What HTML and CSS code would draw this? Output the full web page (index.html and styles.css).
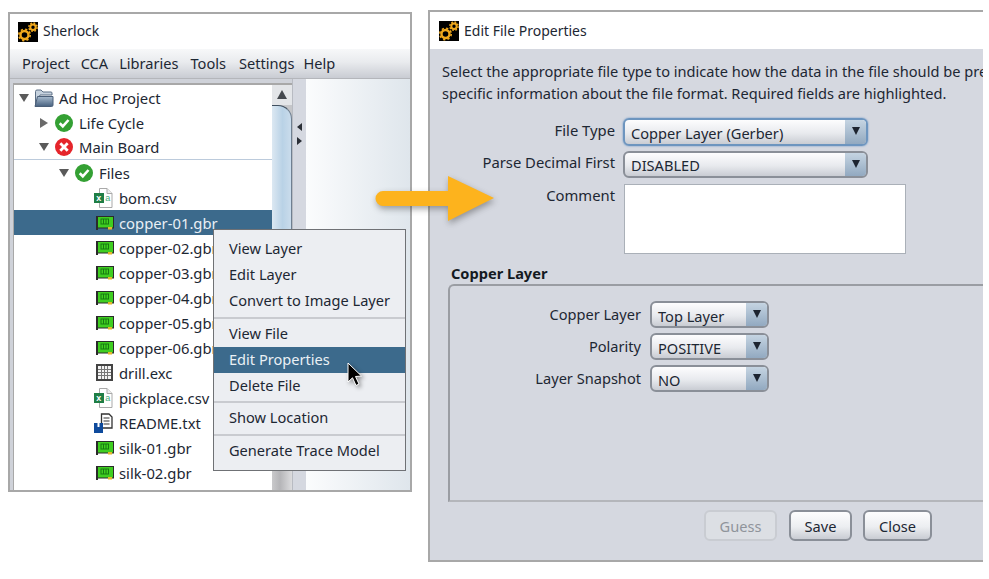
FILE: index.html
```html
<!DOCTYPE html>
<html lang="en">
<head>
<meta charset="utf-8">
<title>Sherlock - Edit File Properties</title>
<link rel="stylesheet" href="styles.css">
</head>
<body>
<svg class="defs" width="0" height="0" aria-hidden="true">
  <defs>
    <symbol id="gears" viewBox="0 0 20 20">
      <rect width="20" height="20" fill="#000"/>
      <circle cx="6.5" cy="13" r="4" fill="none" stroke="#f0a81c" stroke-width="2.4"/>
      <circle cx="6.5" cy="13" r="5.7" fill="none" stroke="#f0a81c" stroke-width="1.6" stroke-dasharray="2.2 2.27"/>
      <circle cx="15" cy="5.2" r="2.7" fill="none" stroke="#f0a81c" stroke-width="2"/>
      <circle cx="15" cy="5.2" r="4.2" fill="none" stroke="#f0a81c" stroke-width="1.4" stroke-dasharray="1.8 1.5"/>
    </symbol>
    <linearGradient id="fld" x1="0" y1="0" x2="0" y2="1">
      <stop offset="0" stop-color="#a9bccf"/><stop offset="1" stop-color="#47617f"/>
    </linearGradient>
    <symbol id="folder" viewBox="0 0 20 20">
      <path d="M1.5 18V3.5q0-1.5 1.5-1.5h4l2 2h8q1 0 1 1v2H6z" fill="#c6d2de" stroke="#5c6f85"/>
      <path d="M1 18.5 3.5 8.5h15.500L19 17q0 1.500-1.500 1.500z" fill="url(#fld)" stroke="#4b5f78"/>
    </symbol>
    <symbol id="ok" viewBox="0 0 18 18">
      <circle cx="9" cy="9" r="9" fill="#34a033"/>
      <path d="M4.700 9.300 7.800 12.300 13.500 6" fill="none" stroke="#fff" stroke-width="2.600"/>
    </symbol>
    <symbol id="bad" viewBox="0 0 18 18">
      <circle cx="9" cy="9" r="9" fill="#e5252b"/>
      <path d="M5.300 5.300 12.700 12.700M12.700 5.300 5.300 12.700" fill="none" stroke="#fff" stroke-width="2.800"/>
    </symbol>
    <symbol id="xls" viewBox="0 0 19 20">
      <path d="M5.500.5H13L18 5.500V19.500H5.500z" fill="#fff" stroke="#a9a9a9"/>
      <path d="M13 .5V5.500H18" fill="#eee" stroke="#a9a9a9"/>
      <rect x="0" y="5" width="10" height="10" fill="#1f7e45"/>
      <text x="2.300" y="12.800" font-family="Liberation Sans" font-weight="700" font-size="9" fill="#fff">x</text>
      <text x="11.300" y="13" font-family="Liberation Sans" font-size="9" fill="#3fae7c">a</text>
    </symbol>
    <symbol id="pcb" viewBox="0 0 18 14">
      <rect x=".5" y=".5" width="17" height="11.500" fill="#3fce20" stroke="#2b2b2b"/>
      <rect x="0" y="0" width="2" height="14" fill="#2b2b2b"/>
      <rect x="5" y="3" width="7.500" height="5" fill="none" stroke="#167a10" stroke-width="1"/>
      <path d="M7.500 3V8M10 3V8" stroke="#167a10" stroke-width="1"/>
      <rect x="12" y="11" width="4" height="2.500" fill="#e3b92c"/>
    </symbol>
    <symbol id="grid" viewBox="0 0 17 17">
      <rect x="1" y="1" width="15" height="15" fill="#f4f4f4" stroke="#444" stroke-width="2"/>
      <path d="M2 5.500H15M2 8.500H15M2 11.500H15M5.500 2V15M8.500 2V15M11.500 2V15" stroke="#777" stroke-width="1"/>
    </symbol>
    <symbol id="txt" viewBox="0 0 19 20">
      <path d="M7.500 1H15L18 4V15H7.500z" fill="#fff" stroke="#333" stroke-width="1.300"/>
      <path d="M9.500 5H15.500M9.500 8H15.500M9.500 11H15.500" stroke="#333" stroke-width="1.200"/>
      <rect x="0" y="10" width="9" height="10" fill="#0e4a9c"/>
      <rect x="3.500" y="10" width="2" height="4" fill="#fff"/>
    </symbol>
  </defs>
</svg>

<section class="window window-main">
  <header class="titlebar titlebar-main">
    <svg class="logo"><use href="#gears"/></svg>
    <span>Sherlock</span>
  </header>
  <nav class="menubar">
    <span>Project</span><span>CCA</span><span>Libraries</span><span>Tools</span><span>Settings</span><span>Help</span>
  </nav>
  <div class="workspace">
    <ul class="tree">
      <li class="row d0"><i class="twist open"></i><svg class="ico ico-folder"><use href="#folder"/></svg><span>Ad Hoc Project</span></li>
      <li class="row d1"><i class="twist closed"></i><svg class="ico ico-status"><use href="#ok"/></svg><span>Life Cycle</span></li>
      <li class="row d1 ruled"><i class="twist open"></i><svg class="ico ico-status"><use href="#bad"/></svg><span>Main Board</span></li>
      <li class="row d2"><i class="twist open"></i><svg class="ico ico-status"><use href="#ok"/></svg><span>Files</span></li>
      <li class="row d3"><i class="twist"></i><svg class="ico ico-doc"><use href="#xls"/></svg><span>bom.csv</span></li>
      <li class="row d3 selected"><i class="twist"></i><svg class="ico ico-pcb"><use href="#pcb"/></svg><span>copper-01.gbr</span></li>
      <li class="row d3"><i class="twist"></i><svg class="ico ico-pcb"><use href="#pcb"/></svg><span>copper-02.gbr</span></li>
      <li class="row d3"><i class="twist"></i><svg class="ico ico-pcb"><use href="#pcb"/></svg><span>copper-03.gbr</span></li>
      <li class="row d3"><i class="twist"></i><svg class="ico ico-pcb"><use href="#pcb"/></svg><span>copper-04.gbr</span></li>
      <li class="row d3"><i class="twist"></i><svg class="ico ico-pcb"><use href="#pcb"/></svg><span>copper-05.gbr</span></li>
      <li class="row d3"><i class="twist"></i><svg class="ico ico-pcb"><use href="#pcb"/></svg><span>copper-06.gbr</span></li>
      <li class="row d3"><i class="twist"></i><svg class="ico ico-grid"><use href="#grid"/></svg><span>drill.exc</span></li>
      <li class="row d3"><i class="twist"></i><svg class="ico ico-doc"><use href="#xls"/></svg><span>pickplace.csv</span></li>
      <li class="row d3"><i class="twist"></i><svg class="ico ico-doc"><use href="#txt"/></svg><span>README.txt</span></li>
      <li class="row d3"><i class="twist"></i><svg class="ico ico-pcb"><use href="#pcb"/></svg><span>silk-01.gbr</span></li>
      <li class="row d3"><i class="twist"></i><svg class="ico ico-pcb"><use href="#pcb"/></svg><span>silk-02.gbr</span></li>
    </ul>
    <div class="scrollbar">
      <div class="scroll-up"><i></i></div>
      <div class="scroll-thumb"></div>
      <div class="scroll-track"></div>
    </div>
    <div class="splitter"><i class="nudge left"></i><i class="nudge right"></i></div>
    <div class="side-panel"></div>
  </div>
</section>

<section class="window window-props">
  <header class="titlebar titlebar-props">
    <svg class="logo"><use href="#gears"/></svg>
    <span>Edit File Properties</span>
  </header>
  <div class="props-body">
    <p class="intro">Select the appropriate file type to indicate how the data in the file should be presented and to provide<br>specific information about the file format. Required fields are highlighted.</p>
    <div class="form">
      <label class="lbl lbl-first">File Type</label>
      <div class="select wide focus"><span>Copper Layer (Gerber)</span><b></b></div>
      <label class="lbl">Parse Decimal First</label>
      <div class="select wide"><span>DISABLED</span><b></b></div>
      <label class="lbl">Comment</label>
      <div class="comment"></div>
    </div>
    <h3 class="group-title">Copper Layer</h3>
    <div class="group">
      <label class="lbl">Copper Layer</label>
      <div class="select narrow"><span>Top Layer</span><b></b></div>
      <label class="lbl">Polarity</label>
      <div class="select narrow"><span>POSITIVE</span><b></b></div>
      <label class="lbl">Layer Snapshot</label>
      <div class="select narrow"><span>NO</span><b></b></div>
    </div>
    <footer class="actions">
      <button class="btn btn-guess" disabled>Guess</button>
      <button class="btn btn-save">Save</button>
      <button class="btn btn-close">Close</button>
    </footer>
  </div>
</section>

<ul class="context-menu">
  <li>View Layer</li>
  <li>Edit Layer</li>
  <li>Convert to Image Layer</li>
  <li class="sep"></li>
  <li>View File</li>
  <li class="active">Edit Properties</li>
  <li>Delete File</li>
  <li class="sep sep-tight"></li>
  <li>Show Location</li>
  <li class="sep"></li>
  <li>Generate Trace Model</li>
</ul>

<svg class="arrow" viewBox="0 0 124 52" width="124" height="52" aria-hidden="true">
  <path d="M8 16H73V1L119 23 73 46V31H8a7.500 7.500 0 0 1 0-15z" fill="#fdb31d"/>
</svg>

<svg class="cursor" viewBox="0 0 16 26" width="16" height="26" aria-hidden="true">
  <path d="M1 1V20L5.500 15.800 9 23.500 12 22 8.500 14.500 14.500 14z" fill="#000" stroke="#fff" stroke-width="1"/>
</svg>
</body>
</html>
```

FILE: styles.css
```css
* { box-sizing: border-box; }
html, body { margin: 0; padding: 0; }
body {
  position: relative;
  width: 989px;
  height: 579px;
  overflow: hidden;
  background: #fff;
  font-family: "Noto Sans", sans-serif;
  font-size: 14.600px;
  color: #1d2733;
}
.defs { position: absolute; }
ul { list-style: none; margin: 0; padding: 0; }

.window { position: absolute; overflow: hidden; }
.window-main {
  left: 8px; top: 12px; width: 404px; height: 480px;
  border: 2px solid #a8a8a8;
  display: flex; flex-direction: column;
}
.window-props {
  left: 428px; top: 10px; width: 555px; height: 552px;
  border: 2px solid #a8a8a8;
  border-right: 0;
  display: flex; flex-direction: column;
}

.titlebar {
  flex: none; height: 35px; background: #fff;
  display: flex; align-items: center; gap: 5px;
  padding-left: 8px;
  font-size: 14px;
}
.titlebar-main span { margin-top: -2px; }
.titlebar-props { height: 37px; padding-left: 9px; }
.logo { width: 20px; height: 20px; flex: none; }

.menubar {
  flex: none; height: 30px;
  background: linear-gradient(#f7f8f9, #e9ebee 45%, #c9ccd3);
  border-bottom: 1px solid #b4b6bb;
  display: flex; align-items: center; gap: 11px;
  padding: 0 0 2px 12px;
}
.menubar span:nth-child(4) { margin-left: 1px; }
.menubar span:nth-child(5) { margin-left: 2px; }
.menubar span:nth-child(6) { margin-left: -2px; }

.workspace { flex: 1; min-height: 0; display: flex; background: #cfd2d9; padding: 0 0 0 3px; }

.tree {
  width: 259px; flex: none; background: #fff; overflow: hidden;
  margin-top: 4px;
  border-top: 2px solid #a8a8a8;
  border-left: 1px solid #a8a8a8;
  font-size: 14.800px;
}
.row {
  height: 25px; display: flex; align-items: center;
  white-space: nowrap; position: relative;
}
.row span { margin-left: 5px; }
.d0 { padding-left: 5px; }
.d1 { padding-left: 25px; }
.d2 { padding-left: 45px; }
.d3 { padding-left: 65px; }
.ruled { border-bottom: 1px solid #bccbdc; }
.selected { background: #3c6a8c; color: #e9eff5; }

.twist { width: 10px; height: 10px; margin-right: 5px; flex: none; display: block; }
.twist.open {
  width: 0; height: 0; margin: 0 5px 0 0;
  border-style: solid; border-width: 8px 5px 0 5px;
  border-color: #5a5a5a transparent transparent;
}
.twist.closed {
  width: 0; height: 0; margin: 0 6px 0 1px;
  border-style: solid; border-width: 5px 0 5px 8px;
  border-color: transparent transparent transparent #6a6a6a;
}

.ico { flex: none; display: block; }
.ico-folder { width: 20px; height: 20px; }
.ico-status { width: 18px; height: 18px; margin-left: 1px; margin-right: 1px; }
.ico-doc { width: 19px; height: 20px; margin-right: 1px; }
.ico-pcb { width: 18px; height: 14px; margin-left: 2px; }
.ico-grid { width: 17px; height: 17px; margin-left: 2px; margin-right: 1px; }

.scrollbar { width: 20px; flex: none; margin-top: 4px; display: flex; flex-direction: column; background: #c5c6c9; border-top: 2px solid #a8a8a8; }
.scroll-up { height: 20px; flex: none; background: #e3e5e8; display: flex; justify-content: center; padding-top: 5px; }
.scroll-up i {
  width: 0; height: 0; display: block;
  border-style: solid; border-width: 0 5px 9px 5px;
  border-color: transparent transparent #44484e;
}
.scroll-thumb {
  height: 366px; flex: none;
  background: linear-gradient(90deg, #dce8f2, #b9d2e6 55%, #cadcec);
  border-top: 1px solid #3f4f5f;
  border-right: 1px solid #6f7f90;
  border-radius: 0 14px 0 0;
}
.scroll-track { flex: 1; background: linear-gradient(90deg, #c9c9cb, #b5b5b8 40%, #dcdcde); }

.splitter {
  width: 14px; flex: none; position: relative; background: #d5d8e0;
  border-left: 1px solid #b8bbc2;
  display: flex; flex-direction: column; align-items: center;
  padding-top: 44px; gap: 6px;
}
.nudge { display: block; width: 0; height: 0; border-style: solid; }
.nudge.left { border-width: 4px 5px 4px 0; border-color: transparent #2b2f36 transparent transparent; }
.nudge.right { border-width: 4px 0 4px 5px; border-color: transparent transparent transparent #2b2f36; }

.side-panel { flex: 1; background: linear-gradient(90deg, #fbfcfd, #dfe6ec); }

.props-body { flex: 1; min-height: 0; background: #d5d8e0; position: relative; display: flex; flex-direction: column; }
.intro { margin: 0; padding: 11px 0 0 12px; line-height: 22px; white-space: nowrap; }

.form {
  display: grid; grid-template-columns: 173px max-content; column-gap: 8px;
  margin: 14px 0 0 12px; align-items: start;
}
.lbl { text-align: right; line-height: 22px; white-space: nowrap; }
.form .lbl { font-size: 14.800px; }
.form .lbl-first { padding-top: 1px; }
.form .wide { margin-bottom: 6px; }
.form .focus { margin-bottom: 5px; }

.select {
  display: flex; height: 27px; border: 2px solid #8a8f98; border-radius: 6px;
  background: linear-gradient(#fdfdfe, #e8eaee 55%, #c9ccd3);
  overflow: hidden; justify-content: space-between;
}
.select span { padding-left: 6px; line-height: 25px; }
.select b {
  width: 21px; flex: none; position: relative;
  background: linear-gradient(#c5d4e2, #92a9c0);
}
.select b::after {
  content: ""; position: absolute; left: 7px; top: 7px;
  border-style: solid; border-width: 8px 4px 0 4px;
  border-color: #1d2430 transparent transparent;
}
.wide { width: 245px; }
.narrow { width: 119px; }
.narrow span { line-height: 27px; }
.focus { height: 28px; border-color: #6d95bf; box-shadow: 0 0 2px #5f8fc4; }
.focus span { line-height: 27px; }

.comment { width: 282px; height: 70px; margin-left: 1px; background: #fff; border: 1px solid #aab0b8; }

.group-title { margin: 9px 0 0 21px; font-size: 14.600px; font-weight: 700; line-height: 20px; color: #141a22; }
.group {
  margin: 1px 0 0 18px; height: 218px;
  border: 2px solid #9a9da3; border-right: 0;
  border-bottom-color: #b4b6bb;
  border-radius: 6px 0 0 0;
  padding: 15px 0 0 0;
  display: grid; grid-template-columns: 191px 119px; column-gap: 9px; row-gap: 5px;
  align-content: start;
}
.group .lbl { padding-top: 2px; }

.actions {
  display: flex; gap: 11px; margin: 8px 0 0 274px;
}
.btn {
  height: 31px; font: inherit; color: inherit; padding: 0;
  border: 2px solid #8a8f98; border-radius: 6px;
  background: linear-gradient(#fdfdfe, #eceef1 55%, #c9ccd3);
}
.btn-guess { width: 73px; border-color: #c9ccd2; background: #dcdfe4; color: #8f949b; }
.btn-save { width: 63px; margin-left: 1px; }
.btn-close { width: 69px; }

.context-menu {
  position: absolute; left: 213px; top: 229px; width: 193px; height: 242px;
  background: #eceef2; border: 1px solid #6f7175;
  padding-top: 5px;
}
.context-menu li { height: 26px; line-height: 26px; padding-left: 15px; }
.context-menu .sep { height: 2px; background: #c9cbd0; margin: 4px 0 1px; padding: 0; }
.context-menu .sep-tight { margin-top: 3px; }
.context-menu .active { background: #3c6a8c; color: #eaf0f5; margin: 1px 0 -1px; line-height: 25px; }

.arrow { position: absolute; left: 375px; top: 175px; filter: drop-shadow(1px 3px 3px rgba(60,60,60,.45)); }
.cursor { position: absolute; left: 347px; top: 362px; filter: drop-shadow(2px 2px 2px rgba(0,0,0,.4)); }
```
